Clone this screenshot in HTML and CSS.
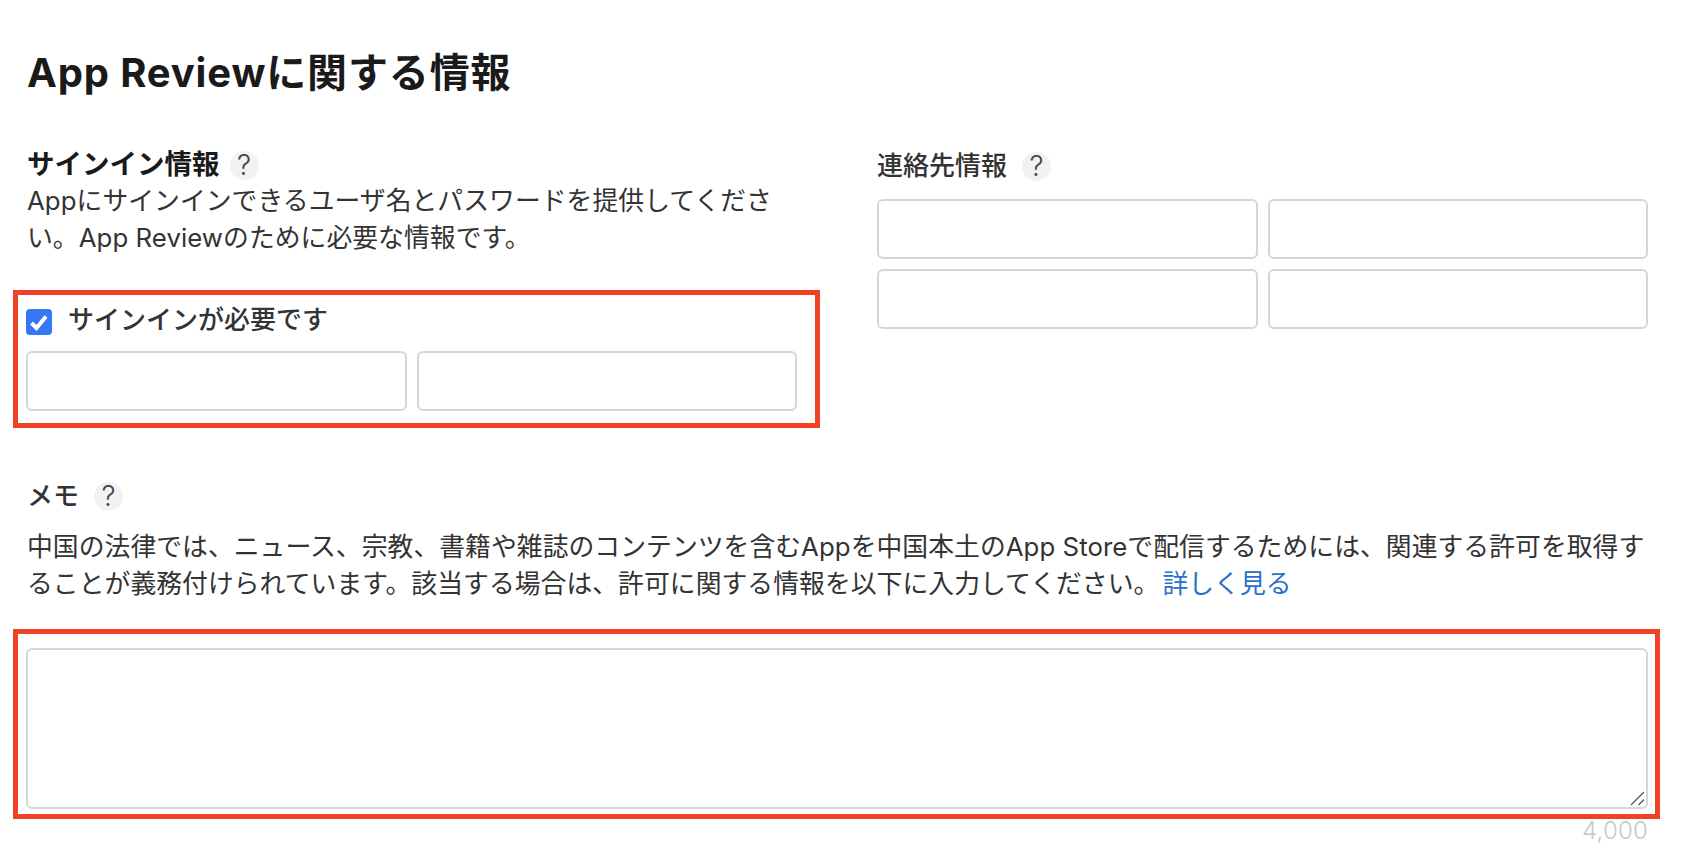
FILE: index.html
```html
<!DOCTYPE html>
<html lang="ja">
<head>
<meta charset="utf-8">
<title>App Reviewに関する情報</title>
<link rel="stylesheet" href="styles.css">
</head>
<body>
<main class="page">
  <h1 class="title">App Reviewに関する情報</h1>
  <div class="columns">
    <section class="signin">
      <div class="head">
        <h2 class="label label-strong">サインイン情報</h2>
        <span class="help">?</span>
      </div>
      <p class="desc">Appにサインインできるユーザ名とパスワードを提供してください。App Reviewのために必要な情報です。</p>
      <div class="mark mark-signin">
        <label class="check-row">
          <svg class="check" viewBox="0 0 26 26" width="26" height="26" aria-hidden="true">
            <rect width="26" height="26" rx="4" fill="#3478f6"/>
            <path d="M5.5 14l5 5L20 7.5" fill="none" stroke="#fff" stroke-width="4"/>
          </svg>
          <span class="check-text">サインインが必要です</span>
        </label>
        <div class="fields">
          <input class="field" type="text" aria-label="ユーザ名">
          <input class="field" type="text" aria-label="パスワード">
        </div>
      </div>
    </section>
    <section class="contact">
      <div class="head head-contact">
        <h2 class="label">連絡先情報</h2>
        <span class="help">?</span>
      </div>
      <div class="fields">
        <input class="field" type="text" aria-label="姓">
        <input class="field" type="text" aria-label="名">
        <input class="field" type="text" aria-label="電話番号">
        <input class="field" type="text" aria-label="メールアドレス">
      </div>
    </section>
  </div>
  <section class="memo">
    <div class="head head-memo">
      <h2 class="label">メモ</h2>
      <span class="help">?</span>
    </div>
    <p class="desc desc-memo">中国の法律では、ニュース、宗教、書籍や雑誌のコンテンツを含むAppを中国本土のApp Storeで配信するためには、関連する許可を取得することが義務付けられています。該当する場合は、許可に関する情報を以下に入力してください。<a class="link" href="#">詳しく見る</a></p>
    <div class="mark mark-memo">
      <div class="area-wrap">
        <textarea class="area" aria-label="メモ"></textarea>
        <svg class="grip" viewBox="0 0 15 15" width="15" height="15" aria-hidden="true">
          <path d="M1 14L14 1M8.5 14L14 8.5" stroke="#555" stroke-width="1.3" fill="none"/>
        </svg>
      </div>
    </div>
    <div class="count">4,000</div>
  </section>
</main>
</body>
</html>
```
FILE: styles.css
```css
* { box-sizing: border-box; }
html, body { margin: 0; background: #fff; }
body {
  font-family: Inter, "Noto Sans CJK JP", sans-serif;
  color: #333;
  height: 868px;
  overflow: hidden;
}
.page { padding: 51px 54px 0 27px; }
.title {
  margin: 0;
  font-size: 40px;
  line-height: 44px;
  font-weight: 700;
  color: #1a1a1a;
  letter-spacing: 0.85px;
}
.columns {
  display: grid;
  grid-template-columns: 771px 771px;
  column-gap: 79px;
  margin-top: 56px;
}
.head {
  display: flex;
  align-items: center;
  height: 29px;
  gap: 10px;
}
.head-contact { margin-top: 1px; gap: 15px; }
.head-memo { gap: 15px; }
.label {
  margin: 0 0 2px;
  font-size: 26px;
  line-height: 29px;
  font-weight: 500;
  color: #333;
}
.label-strong { font-size: 27.5px; font-weight: 700; color: #1a1a1a; }
.help {
  width: 29px;
  height: 29px;
  border-radius: 50%;
  background: #f2f2f2;
  color: #444;
  font-size: 28px;
  font-weight: 300;
  line-height: 29px;
  text-align: center;
}
.desc {
  margin: 3px 0 0;
  font-size: 25.8px;
  line-height: 36.5px;
  letter-spacing: 0.05px;
  color: #333;
  width: 752px;
}
.desc-memo { width: auto; margin-top: 18px; }
.link { color: #2a6fc9; text-decoration: none; margin-left: 3px; }
.mark { border: 5px solid #ee4125; }
.mark-signin {
  margin: 34px -22px 0 -14px;
  padding: 14px 18px 12px 8px;
}
.check-row {
  display: flex;
  align-items: center;
  gap: 16px;
  height: 26px;
  margin-bottom: 16px;
}
.check { display: block; flex: none; }
.check-text {
  font-size: 26px;
  font-weight: 500;
  color: #333;
  line-height: 26px;
  margin-top: -4px;
}
.fields {
  display: grid;
  grid-template-columns: 1fr 1fr;
  gap: 10px;
}
.contact .fields { margin-top: 18px; }
.field {
  display: block;
  width: 100%;
  height: 60px;
  border: 2px solid #d6d6d6;
  border-radius: 6px;
  background: #fff;
  padding: 0 10px;
  outline: none;
}
.memo { margin-top: 54px; }
.mark-memo {
  margin: 27px -12px 0 -14px;
  padding: 14px 7px 5px 8px;
}
.area-wrap { position: relative; height: 161px; }
.area {
  display: block;
  width: 100%;
  height: 100%;
  border: 2px solid #d6d6d6;
  border-radius: 6px;
  background: #fff;
  resize: none;
  outline: none;
}
.grip { position: absolute; right: 3px; bottom: 3px; }
.count {
  text-align: right;
  font-size: 24px;
  line-height: 24px;
  letter-spacing: 0.2px;
  font-weight: 300;
  color: #c8c8c8;
}
```
